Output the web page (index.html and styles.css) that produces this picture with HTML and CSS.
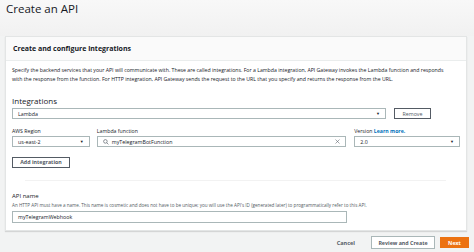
FILE: index.html
```html
<!DOCTYPE html>
<html lang="en">
<head>
    <meta charset="UTF-8">
    <meta name="viewport" content="width=device-width, initial-scale=1.0">
    <title>Create an API</title>
    <link rel="stylesheet" href="styles.css">
</head>
<body>
    <h1 class="page-title">Create an API</h1>

    <div class="card">
        <div class="card-header">Create and configure integrations</div>
        <div class="card-body">
            <p class="desc">Specify the backend services that your API will communicate with. These are called integrations. For a Lambda integration, API Gateway invokes the Lambda function and responds<br>with the response from the function. For HTTP integration, API Gateway sends the request to the URL that you specify and returns the response from the URL.</p>

            <h2 class="section-title">Integrations</h2>
            <div class="row">
                <div class="select wide">Lambda<span class="caret">&#9660;</span></div>
                <button class="btn remove">Remove</button>
            </div>

            <div class="row fields">
                <div class="field region">
                    <label>AWS Region</label>
                    <div class="select">us-east-2<span class="caret">&#9660;</span></div>
                </div>
                <div class="field lambda">
                    <label>Lambda function</label>
                    <div class="input search">
                        <svg class="icon" viewBox="0 0 10 10" width="6" height="6"><circle cx="4" cy="4" r="3" fill="none" stroke="#545b64" stroke-width="1.1"/><path d="M6.2 6.2 9 9" stroke="#545b64" stroke-width="1.1"/></svg>
                        <span class="grow">myTelegramBotFunction</span>
                        <svg class="icon" viewBox="0 0 10 10" width="5" height="5"><path d="M1 1 9 9M9 1 1 9" stroke="#545b64" stroke-width="1.1"/></svg>
                    </div>
                </div>
                <div class="field version">
                    <label>Version <a href="#">Learn more.</a></label>
                    <div class="select">2.0<span class="caret">&#9660;</span></div>
                </div>
            </div>

            <button class="btn add">Add integration</button>

            <hr class="divider">

            <label class="name-label">API name</label>
            <p class="hint">An HTTP API must have a name. This name is cosmetic and does not have to be unique; you will use the API's ID (generated later) to programmatically refer to this API.</p>
            <div class="input name">myTelegramWebhook</div>
        </div>
    </div>

    <div class="actions">
        <span class="cancel">Cancel</span>
        <button class="btn review">Review and Create</button>
        <button class="btn next">Next</button>
    </div>
</body>
</html>
```

FILE: styles.css
```css
body {
    margin: 0;
    background: #f2f3f3;
    font-family: "Open Sans", Arial, sans-serif;
    color: #16191f;
}
.page-title {
    margin: 0;
    padding: 1px 0 0 6px;
    height: 35px;
    font-size: 11.5px;
    font-weight: normal;
    line-height: 16px;
    background: linear-gradient(#f8f8f8, #f1f1f1);
}
.card {
    margin: 0 7px 0 5px;
    background: white;
    border: 1px solid #e3e5e5;
    box-shadow: 0 1px 1px rgba(0, 0, 0, 0.12);
}
.card-header {
    height: 23px;
    padding-left: 7px;
    background: #fafafa;
    border-bottom: 1px solid #eaeded;
    font-size: 7px;
    font-weight: bold;
    line-height: 23px;
}
.card-body {
    padding: 5px 6px 7px 6px;
}
.desc {
    margin: 0;
    font-size: 5.2px;
    line-height: 9px;
    white-space: nowrap;
}
.section-title {
    margin: 12px 0 3px;
    font-size: 8px;
    font-weight: normal;
    line-height: 9px;
}
.row {
    display: flex;
    align-items: center;
    gap: 8px;
}
.select, .input {
    display: flex;
    align-items: center;
    height: 9px;
    padding: 0 5px;
    border: 1px solid #aab7b8;
    background: white;
    font-size: 5.3px;
}
.select {
    justify-content: space-between;
}
.caret {
    font-size: 4px;
    color: #16191f;
}
.wide {
    width: 362px;
}
.btn {
    font-family: inherit;
    font-size: 5.3px;
    background: white;
    color: #545b64;
    border: 1px solid #545b64;
    padding: 0;
    height: 11px;
}
.remove {
    width: 37px;
}
.fields {
    margin-top: 8px;
    align-items: flex-end;
}
.field label {
    display: block;
    font-size: 5.2px;
    line-height: 9px;
}
.field label a {
    color: #0073bb;
    font-weight: bold;
    text-decoration: none;
}
.region {
    width: 78px;
}
.lambda {
    width: 250px;
    margin-left: -1px;
}
.version {
    width: 106px;
}
.search {
    gap: 3px;
}
.grow {
    flex: 1;
}
.add {
    margin-top: 8px;
    width: 58px;
    font-weight: bold;
    color: #545b64;
}
.divider {
    margin: 11px 14px 0 13px;
    border: none;
    border-top: 1px solid #f2f2f2;
}
.name-label {
    display: block;
    margin-top: 11px;
    font-size: 6px;
    line-height: 8px;
}
.hint {
    margin: 1px 0 2px;
    font-size: 4.6px;
    line-height: 8px;
    color: #545b64;
}
.name {
    width: 323px;
    height: 10px;
}
.actions {
    display: flex;
    justify-content: flex-end;
    align-items: center;
    gap: 5px;
    padding: 5px 5px 0 0;
}
.cancel {
    font-size: 5.5px;
    font-weight: bold;
    color: #545b64;
    margin-right: 11px;
}
.review {
    width: 64px;
    height: 13px;
    font-weight: bold;
    border-color: #aab7b8;
}
.next {
    width: 29px;
    height: 11px;
    background: #ec7211;
    border-color: #ec7211;
    color: white;
    font-weight: bold;
}
```
